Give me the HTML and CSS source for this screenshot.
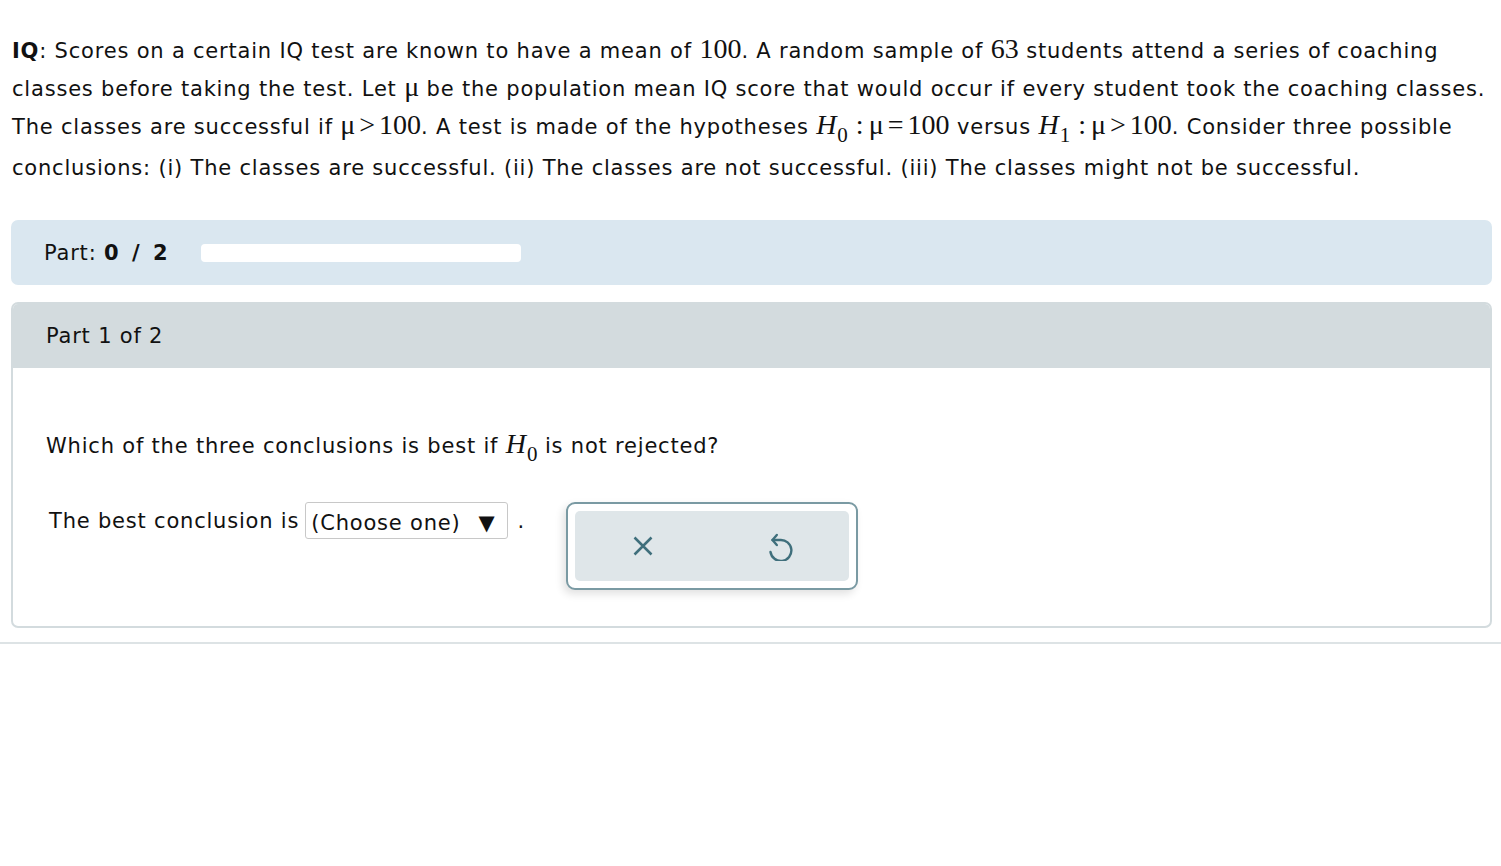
FILE: index.html
```html
<!DOCTYPE html>
<html lang="en">
<head>
  <meta charset="UTF-8" />
  <title>IQ coaching question</title>
  <link rel="stylesheet" href="styles.css">
</head>
<body>
  <div class="page">
    <p class="intro">
      <b class="tag">IQ</b>: Scores on a certain IQ test are known to have a mean of <span class="m">100</span>. A random sample of <span class="m">63</span> students attend a series of coaching<br>
      classes before taking the test. Let <span class="m">μ</span> be the population mean IQ score that would occur if every student took the coaching classes.<br>
      The classes are successful if <span class="m">μ<span class="rel">&gt;</span>100</span>. A test is made of the hypotheses <span class="m"><i>H</i><sub>0</sub><span class="colon">:</span>μ<span class="rel">=</span>100</span> versus <span class="m"><i>H</i><sub>1</sub><span class="colon">:</span>μ<span class="rel">&gt;</span>100</span>. Consider three possible<br>
      <span class="last">conclusions: (i) The classes are successful. (ii) The classes are not successful. (iii) The classes might not be successful.</span>
    </p>

    <div class="progress">
      <span>Part: <b>0 / 2</b></span>
      <div class="progress-bar"></div>
    </div>

    <div class="part">
      <div class="part-head">Part 1 of 2</div>
      <div class="part-body">
        <p class="question">Which of the three conclusions is best if <span class="m"><i>H</i><sub>0</sub></span> is not rejected?</p>
        <div class="answer-row">
          <div class="answer">
            <span>The best conclusion is</span>
            <span class="select">(Choose one) <span class="caret">▼</span></span>
            <span class="dot">.</span>
          </div>
          <div class="actions">
            <div class="actions-inner">
              <button class="icon-btn" aria-label="Clear">
                <svg width="20" height="20" viewBox="0 0 20 20"><path d="M1.5 1.5 L18.5 18.5 M18.5 1.5 L1.5 18.5" stroke="#3f6f7c" stroke-width="2.5" fill="none"/></svg>
              </button>
              <button class="icon-btn" aria-label="Undo">
                <svg width="30" height="30" viewBox="6 6 30 30"><path d="M13.5 15 H21 A10.5 10.5 0 1 1 11.5 27" stroke="#3f6f7c" stroke-width="2.4" fill="none" stroke-linecap="round"/><path d="M17.8 10 L13.5 15 L17.8 20" stroke="#3f6f7c" stroke-width="2.4" fill="none" stroke-linecap="round" stroke-linejoin="round"/></svg>
              </button>
            </div>
          </div>
        </div>
      </div>
    </div>
  </div>
  <div class="rule"></div>
</body>
</html>
```

FILE: styles.css
```css
html, body {
  margin: 0;
  padding: 0;
  background: white;
  color: #111;
  font-family: "DejaVu Sans", Verdana, sans-serif;
  font-size: 21px;
  letter-spacing: 0.8px;
}

.page {
  padding: 0 9px 0 11px;
}

.intro {
  margin: 0;
  padding: 32px 0 0 1px;
  line-height: 38px;
  white-space: nowrap;
}

.intro .last {
  display: inline-block;
  margin-top: 3px;
}

.m {
  font-family: "Liberation Serif", "Times New Roman", serif;
  font-size: 28px;
  line-height: 20px;
  letter-spacing: 0;
}

.m i {
  font-style: italic;
}

.m sub {
  font-size: 21px;
  line-height: 0;
  vertical-align: -8px;
  margin-left: 1px;
}

.rel {
  margin: 0 4px;
}

.colon {
  margin: 0 5px 0 8px;
}

.progress {
  margin-top: 33px;
  height: 65px;
  background: #dae7f0;
  border-radius: 7px;
  display: flex;
  align-items: center;
  padding-left: 33px;
  gap: 31px;
}

.progress b {
  letter-spacing: 2px;
  word-spacing: 2px;
}

.progress-bar {
  width: 320px;
  height: 18px;
  background: white;
  border-radius: 4px;
}

.part {
  margin-top: 17px;
  border: 2px solid #d3dbde;
  border-radius: 7px;
  overflow: hidden;
}

.part-head {
  background: #d3dbde;
  height: 64px;
  display: flex;
  align-items: center;
  padding-left: 33px;
}

.part-body {
  padding: 52px 33px 36px 33px;
}

.question {
  margin: 0;
  line-height: 52px;
}

.answer-row {
  margin-top: 30px;
  display: flex;
  align-items: flex-start;
  gap: 41px;
}

.answer {
  display: flex;
  align-items: center;
  padding-left: 3px;
  height: 37px;
}

.select {
  margin-left: 6px;
  border: 1px solid #c8c8c8;
  border-radius: 3px;
  padding: 4px 12px 0 5px;
  display: flex;
  align-items: center;
  box-sizing: border-box;
  height: 37px;
}

.caret {
  margin-left: 18px;
}

.dot {
  margin-left: 9px;
}

.actions {
  border: 2px solid #7a9aa3;
  border-radius: 9px;
  padding: 7px;
  box-shadow: -3px 4px 8px rgba(0, 0, 0, 0.12);
  background: white;
}

.actions-inner {
  width: 274px;
  height: 70px;
  background: #dfe6e9;
  border-radius: 5px;
  display: flex;
  align-items: center;
  justify-content: space-around;
}

.icon-btn {
  border: none;
  background: none;
  padding: 0;
  width: 40px;
  height: 40px;
  display: flex;
  align-items: center;
  justify-content: center;
}

.rule {
  margin-top: 14px;
  height: 2px;
  background: #dde3e5;
}
```
